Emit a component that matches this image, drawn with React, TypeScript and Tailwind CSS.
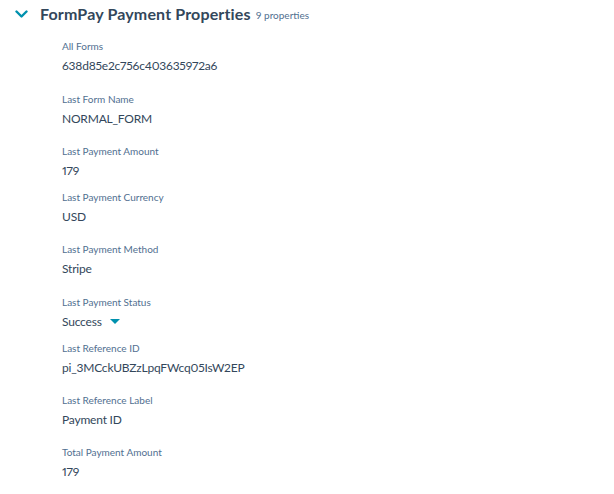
import { useState } from "react";

type Prop = { label: string; value: string; dropdown?: boolean; mt: string };

const PROPS: Prop[] = [
  { label: "All Forms", value: "638d85e2c756c403635972a6", mt: "mt-0" },
  { label: "Last Form Name", value: "NORMAL_FORM", mt: "mt-[16px]" },
  { label: "Last Payment Amount", value: "179", mt: "mt-[15px]" },
  { label: "Last Payment Currency", value: "USD", mt: "mt-[9px]" },
  { label: "Last Payment Method", value: "Stripe", mt: "mt-[15px]" },
  { label: "Last Payment Status", value: "Success", dropdown: true, mt: "mt-[16px]" },
  { label: "Last Reference ID", value: "pi_3MCckUBZzLpqFWcq05IsW2EP", mt: "mt-[9px]" },
  { label: "Last Reference Label", value: "Payment ID", mt: "mt-[15px]" },
  { label: "Total Payment Amount", value: "179", mt: "mt-[15px]" },
];

export default function App() {
  const [open, setOpen] = useState(true);

  return (
    <div className="h-[494px] w-[614px] overflow-hidden bg-white font-['Lato',sans-serif] text-[#33475b]">
      <button
        onClick={() => setOpen(!open)}
        className="flex items-center pl-[15px] pt-[3px]"
      >
        <svg width="13" height="8" viewBox="0 0 13 8" className="text-[#0091ae]">
          <path d="M1.5 1.5 L6.5 6.5 L11.5 1.5" fill="none" stroke="currentColor" strokeWidth="2.4" strokeLinecap="round" strokeLinejoin="round" />
        </svg>
        <span className="ml-[12px] text-[16px] font-bold leading-[22px] tracking-[0.15px]">FormPay Payment Properties</span>
        <span className="ml-[5px] mt-[3px] text-[10px] text-[#516f90]">9 properties</span>
      </button>

      {open && (
        <div className="pl-[62px] pt-[13px]">
          {PROPS.map((p) => (
            <div key={p.label} className={p.mt}>
              <div className="text-[10px] leading-[16px] text-[#516f90]">{p.label}</div>
              <div className="mt-[3px] flex items-center text-[12px] leading-[18px] tracking-[-0.2px] proportional-nums">
                <span>{p.value}</span>
                {p.dropdown && (
                  <svg width="10" height="6" viewBox="0 0 10 6" className="ml-[8px] text-[#0091ae]">
                    <path d="M0 0 H10 L5 5 Z" fill="currentColor" />
                  </svg>
                )}
              </div>
            </div>
          ))}
        </div>
      )}
    </div>
  );
}
